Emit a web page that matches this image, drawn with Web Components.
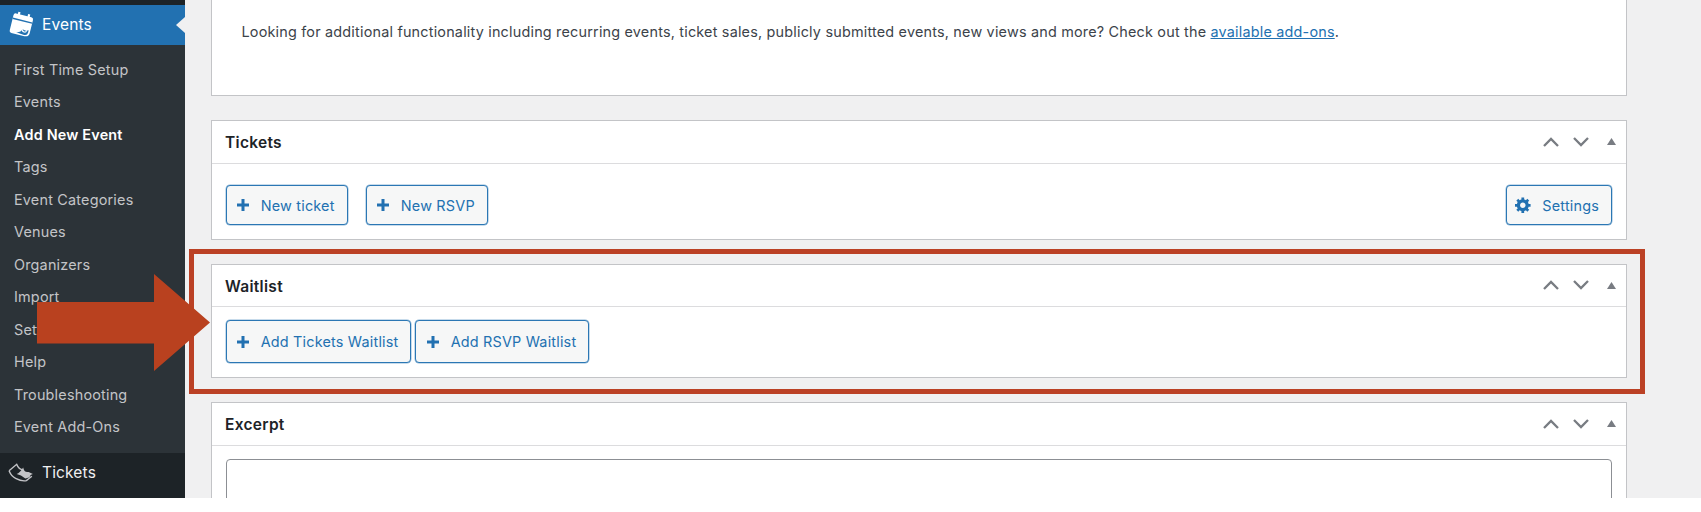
<!DOCTYPE html>
<html lang="en">
<head>
<meta charset="utf-8">
<title>Add New Event</title>
<style>
html, body { margin: 0; padding: 0; background: #fff; }
body { font-family: Inter, "Liberation Sans", sans-serif; }
wp-page { height: 497.7px; }
.intro { margin-left: 25.5px; }
.tickets { margin: 24px 0 0 25.5px; }
.frame { margin: 9px 0 0 4px; }
.excerpt { margin: 8px 0 0 25.5px; }
</style>
</head>
<body>

<wp-page>
  <wp-sidebar slot="sidebar">
    <wp-menu-head icon="events" current>Events</wp-menu-head>
    <wp-submenu>
      <wp-subitem>First Time Setup</wp-subitem>
      <wp-subitem>Events</wp-subitem>
      <wp-subitem current>Add New Event</wp-subitem>
      <wp-subitem>Tags</wp-subitem>
      <wp-subitem>Event Categories</wp-subitem>
      <wp-subitem>Venues</wp-subitem>
      <wp-subitem>Organizers</wp-subitem>
      <wp-subitem>Import</wp-subitem>
      <wp-subitem>Settings</wp-subitem>
      <wp-subitem>Help</wp-subitem>
      <wp-subitem>Troubleshooting</wp-subitem>
      <wp-subitem>Event Add-Ons</wp-subitem>
    </wp-submenu>
    <wp-menu-head icon="tickets">Tickets</wp-menu-head>
  </wp-sidebar>

  <wp-notice class="intro">Looking for additional functionality including recurring events, ticket sales, publicly submitted events, new views and more? Check out the <a href="#">available add-ons</a>.</wp-notice>

  <wp-metabox class="tickets" heading="Tickets" style="--pad-top:21.5px;--pad-bottom:14px;--btn-h:40px;--btn-gap:18px">
    <wp-button icon="plus">New ticket</wp-button>
    <wp-button icon="plus">New RSVP</wp-button>
    <wp-button icon="gear" slot="end">Settings</wp-button>
  </wp-metabox>

  <wp-highlight class="frame">
    <wp-metabox heading="Waitlist" style="--pad-top:13px;--pad-bottom:14px;--btn-h:43px;--btn-gap:4px">
      <wp-button icon="plus">Add Tickets Waitlist</wp-button>
      <wp-button icon="plus">Add RSVP Waitlist</wp-button>
    </wp-metabox>
  </wp-highlight>

  <wp-metabox class="excerpt" heading="Excerpt" style="--pad-top:13.2px;--pad-bottom:0px">
    <wp-textbox></wp-textbox>
  </wp-metabox>

  <wp-arrow></wp-arrow>
</wp-page>

<script>
const ICONS = {
    plus: `<svg width="14" height="14" viewBox="0 0 14 14"><path d="M7 1v12M1 7h12" stroke="currentColor" stroke-width="3" fill="none"/></svg>`,
    gear: `<svg style="margin-left:-1.3px" width="16.500" height="16.500" viewBox="1 1.500 18 18"><path fill="currentColor" d="M18 12h-2.180c-.170.700-.440 1.350-.810 1.930l1.540 1.540-2.100 2.100-1.540-1.540c-.580.360-1.230.630-1.910.790V19H8v-2.180c-.680-.160-1.330-.430-1.910-.790l-1.540 1.540-2.120-2.120 1.540-1.540c-.360-.580-.630-1.230-.790-1.910H1V9.030h2.170c.160-.700.440-1.350.800-1.940L2.430 5.550l2.100-2.100 1.540 1.540c.580-.370 1.240-.640 1.930-.810V2h3v2.180c.680.160 1.330.430 1.910.790l1.540-1.540 2.120 2.120-1.540 1.540c.360.590.640 1.240.800 1.940H18V12zm-8.500 1.500c1.660 0 3-1.340 3-3s-1.340-3-3-3-3 1.340-3 3 1.340 3 3 3z"/></svg>`,
    events: `<svg width="27" height="29" viewBox="0 0 24 26"><g transform="rotate(14 12 13)"><path fill="#fff" d="M3 6.500q0-2 2-2h14q2 0 2 2v12q0 4-4 4H5q-2 0-2-2z"/><path d="M7.500 2.500v4M16.500 2.500v4" stroke="#fff" stroke-width="2" fill="none"/><path d="M3 9.500h18" stroke="#2271b1" stroke-width="1.300" fill="none"/><path fill="#2271b1" d="M9 20.800q4-.5 5-3.800 3 1 5.500-.5v2q0 3-3 3z"/><path d="M14 17q0 2 2 2t1.500-2" stroke="#fff" stroke-width="1" fill="none"/></g></svg>`,
    tickets: `<svg width="26" height="22" viewBox="0 0 24 20"><path d="M1 8L8 2Q10 7 14 7" fill="none" stroke="#c3c4c7" stroke-width="1.300"/><path d="M1 8Q3 13 7 15Q13 18 17 17L22 13" fill="none" stroke="#c3c4c7" stroke-width="1.300"/><path d="M14 5Q15 10 19 9L23 11Q20 12 20 14L16 15Q12 12 8 11Q11 10 14 5z" fill="#c3c4c7"/></svg>`
};

// page shell: sidebar on the left, content column on the right
class WpPage extends HTMLElement {
    constructor() {
        super();
        this.attachShadow({mode: "open"});
        this.shadowRoot.innerHTML = `
<style>
:host {
    display: flex;
    position: relative;
    overflow: hidden;
    background: #f0f0f1;
    color: #3c434a;
}
.content {
    flex: 1;
    min-width: 0;
}
</style>
<slot name="sidebar"></slot>
<div class="content"><slot></slot></div>`;
    }
}

class WpSidebar extends HTMLElement {
    constructor() {
        super();
        this.attachShadow({mode: "open"});
        this.shadowRoot.innerHTML = `
<style>
:host {
    display: block;
    flex: 0 0 185px;
    background: #1d2327;
    padding-top: 5px;
    box-sizing: border-box;
}
</style>
<slot></slot>`;
    }
}

class WpMenuHead extends HTMLElement {
    constructor() {
        super();
        this.attachShadow({mode: "open"});
        this.shadowRoot.innerHTML = `
<style>
:host {
    display: flex;
    align-items: center;
    position: relative;
    box-sizing: border-box;
    height: 45px;
    padding: 0 0 4.600px 9px;
    gap: 9px;
    font-size: 15.500px;
    letter-spacing: .15px;
    color: #f0f0f1;
    background: #1d2327;
}
:host([current]) {
    height: 39.500px;
    padding-bottom: 0;
    background: #2271b1;
    color: #fff;
}
:host([current])::after {
    content: "";
    position: absolute;
    right: 0;
    top: 12px;
    border: 8.500px solid transparent;
    border-right: 9px solid #f0f0f1;
    border-left: 0;
}
.icon { display: flex; width: 24px; justify-content: center; }
.icon svg { flex: none; }
</style>
<span class="icon"></span><slot></slot>`;
        this.shadowRoot.querySelector(".icon").innerHTML = ICONS[this.getAttribute("icon")] || "";
    }
}

class WpSubmenu extends HTMLElement {
    constructor() {
        super();
        this.attachShadow({mode: "open"});
        this.shadowRoot.innerHTML = `
<style>
:host {
    display: block;
    background: #2c3338;
    padding: 9px 0 9.200px;
}
</style>
<slot></slot>`;
    }
}

class WpSubitem extends HTMLElement {
    constructor() {
        super();
        this.attachShadow({mode: "open"});
        this.shadowRoot.innerHTML = `
<style>
:host {
    display: block;
    padding-left: 14px;
    line-height: 32.500px;
    font-size: 14.400px;
    letter-spacing: .2px;
    color: #c3c4c7;
    white-space: nowrap;
}
:host([current]) {
    color: #fff;
    font-weight: 600;
}
</style>
<slot></slot>`;
    }
}

class WpNotice extends HTMLElement {
    constructor() {
        super();
        this.attachShadow({mode: "open"});
        this.shadowRoot.innerHTML = `
<style>
:host {
    display: block;
    box-sizing: border-box;
    width: 1416.500px;
    height: 96px;
    padding: 22px 0 0 30px;
    background: #fff;
    border: 1px solid #c3c4c7;
    border-top: 0;
    font-size: 14.400px;
    letter-spacing: .2px;
    line-height: 20px;
    color: #3c434a;
}
::slotted(a) { color: #2271b1; }
</style>
<slot></slot>`;
    }
}

class WpMetabox extends HTMLElement {
    constructor() {
        super();
        this.attachShadow({mode: "open"});
        this.shadowRoot.innerHTML = `
<style>
:host {
    display: block;
    box-sizing: border-box;
    width: 1416.500px;
    background: #fff;
    border: 1px solid #c3c4c7;
}
header {
    display: flex;
    align-items: center;
    box-sizing: border-box;
    height: 42.500px;
    padding-left: 13.500px;
    border-bottom: 1.500px solid #dcdcde;
    color: #1d2327;
}
h2 {
    flex: 1;
    margin: 0;
    padding-top: 1.500px;
    font-size: 15.500px;
    letter-spacing: .3px;
    font-weight: 600;
}
.handles {
    display: flex;
    align-items: center;
    color: #787c82;
    padding-right: 10px;
}
.handles svg { display: block; }
.handles .down { margin-left: 14px; }
.handles .toggle { margin-left: 18px; }
.body {
    display: flex;
    align-items: flex-start;
    gap: var(--btn-gap, 0);
    padding: var(--pad-top, 14px) 14px var(--pad-bottom, 14px);
}
.end { margin-left: auto; }
</style>
<header>
  <h2></h2>
  <div class="handles">
    <svg width="16" height="10" viewBox="0 0 16 10"><path d="M1 9l7-7 7 7" fill="none" stroke="currentColor" stroke-width="2.300"/></svg>
    <svg class="down" width="16" height="10" viewBox="0 0 16 10"><path d="M1 1l7 7 7-7" fill="none" stroke="currentColor" stroke-width="2.300"/></svg>
    <svg class="toggle" width="9" height="7" viewBox="0 0 9 7"><path d="M4.500 0L9 7H0z" fill="currentColor"/></svg>
  </div>
</header>
<div class="body"><slot></slot><div class="end"><slot name="end"></slot></div></div>`;
        this.shadowRoot.querySelector("h2").textContent = this.getAttribute("heading");
    }
}

class WpButton extends HTMLElement {
    constructor() {
        super();
        this.attachShadow({mode: "open"});
        this.shadowRoot.innerHTML = `
<style>
:host {
    display: inline-flex;
    align-items: center;
    box-sizing: border-box;
    height: var(--btn-h, 40px);
    padding: 0 12px 0 9.500px;
    gap: 10.700px;
    background: #f6f7f7;
    border: 1px solid #2b77b4;
    box-shadow: 0 0 0 .5px rgba(34, 113, 177, .5);
    border-radius: 4px;
    color: #2271b1;
    font-size: 14.400px;
    letter-spacing: .2px;
    white-space: nowrap;
}
.icon { display: flex; }
</style>
<span class="icon"></span><slot></slot>`;
        this.shadowRoot.querySelector(".icon").innerHTML = ICONS[this.getAttribute("icon")] || "";
    }
}

class WpHighlight extends HTMLElement {
    constructor() {
        super();
        this.attachShadow({mode: "open"});
        this.shadowRoot.innerHTML = `
<style>
:host {
    display: block;
    box-sizing: border-box;
    width: 1456px;
    padding: 9.500px 0 11px 16.500px;
    border: 5px solid #bb4125;
}
</style>
<slot></slot>`;
    }
}

class WpTextbox extends HTMLElement {
    constructor() {
        super();
        this.attachShadow({mode: "open"});
        this.shadowRoot.innerHTML = `
<style>
:host {
    display: block;
    flex: 1;
    height: 120px;
    background: #fff;
    border: 1px solid #8c8f94;
    border-radius: 4px;
}
</style>`;
    }
}

// annotation arrow that lies over the sidebar
class WpArrow extends HTMLElement {
    constructor() {
        super();
        this.attachShadow({mode: "open"});
        this.shadowRoot.innerHTML = `
<style>
:host {
    position: absolute;
    left: 37px;
    top: 274px;
    width: 173px;
    height: 97px;
}
svg { display: block; }
</style>
<svg width="173" height="97" viewBox="0 0 173 97"><path fill="#b9411f" d="M0 28h117V0l56 48.500-56 48.500V69.500H0z"/></svg>`;
    }
}

customElements.define("wp-page", WpPage);
customElements.define("wp-sidebar", WpSidebar);
customElements.define("wp-menu-head", WpMenuHead);
customElements.define("wp-submenu", WpSubmenu);
customElements.define("wp-subitem", WpSubitem);
customElements.define("wp-notice", WpNotice);
customElements.define("wp-metabox", WpMetabox);
customElements.define("wp-button", WpButton);
customElements.define("wp-highlight", WpHighlight);
customElements.define("wp-textbox", WpTextbox);
customElements.define("wp-arrow", WpArrow);
</script>
</body>
</html>
